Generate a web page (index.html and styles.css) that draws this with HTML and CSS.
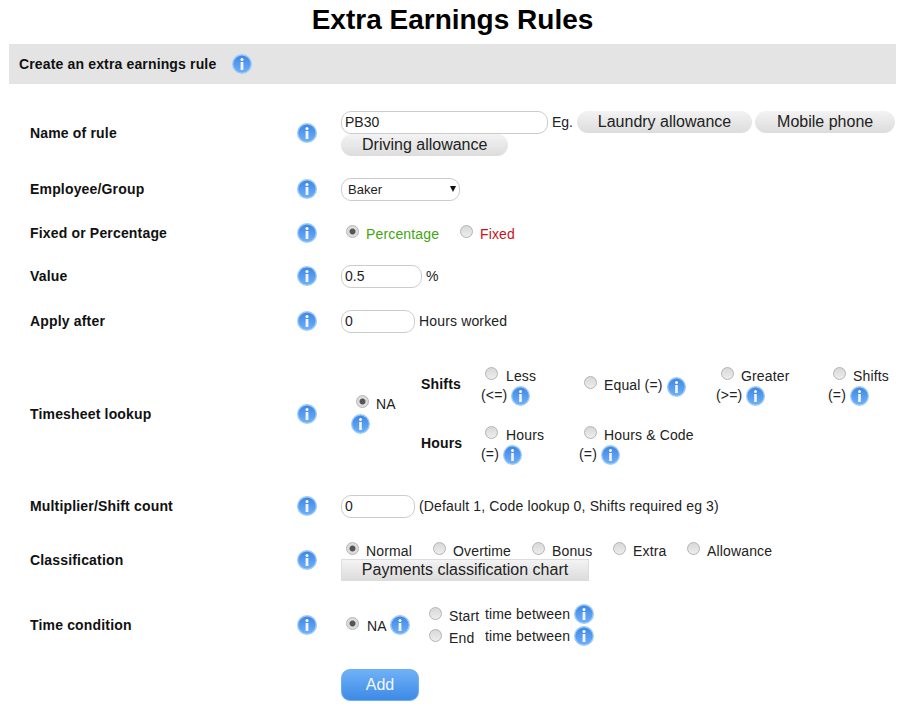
FILE: index.html
```html
<!DOCTYPE html>
<html lang="en">
<head>
<meta charset="utf-8">
<title>Extra Earnings Rules</title>
<link rel="stylesheet" href="styles.css">
</head>
<body>
<svg class="defs" width="0" height="0" aria-hidden="true">
  <defs>
    <linearGradient id="infoFill" x1="0" y1="0" x2="0" y2="1">
      <stop offset="0" stop-color="#3f86e4"/>
      <stop offset="1" stop-color="#6cb0f8"/>
    </linearGradient>
    <symbol id="info" viewBox="0 0 20 20" preserveAspectRatio="none">
      <circle cx="10" cy="10" r="10" fill="#9ccaf8"/>
      <circle cx="10" cy="10" r="8.6" fill="url(#infoFill)"/>
      <circle cx="10" cy="5.4" r="1.5" fill="#fff"/>
      <rect x="8.6" y="8" width="2.8" height="8" fill="#f6f2ff"/>
    </symbol>
  </defs>
</svg>

<h1 class="title">Extra Earnings Rules</h1>
<div class="banner"><span class="banner-text">Create an extra earnings rule</span><svg class="info"><use href="#info"/></svg></div>

<form class="form">
  <div class="row row-name">
    <div class="label">Name of rule</div>
    <svg class="info"><use href="#info"/></svg>
    <div class="field">
      <input class="text text-name" type="text" value="PB30"> Eg.
      <button type="button" class="btn">Laundry allowance</button>
      <button type="button" class="btn btn-mobile">Mobile phone</button>
      <button type="button" class="btn">Driving allowance</button>
    </div>
  </div>

  <div class="row row-employee">
    <div class="label">Employee/Group</div>
    <svg class="info"><use href="#info"/></svg>
    <div class="field"><span class="select-wrap"><select class="select"><option>Baker</option></select></span></div>
  </div>

  <div class="row row-fixed">
    <div class="label">Fixed or Percentage</div>
    <svg class="info"><use href="#info"/></svg>
    <div class="field radios">
      <label class="opt green"><input class="radio" type="radio" name="fp" checked>Percentage</label>
      <label class="opt red"><input class="radio" type="radio" name="fp">Fixed</label>
    </div>
  </div>

  <div class="row row-value">
    <div class="label">Value</div>
    <svg class="info"><use href="#info"/></svg>
    <div class="field field-line"><input class="text text-value" type="text" value="0.5"> %</div>
  </div>

  <div class="row row-apply">
    <div class="label">Apply after</div>
    <svg class="info"><use href="#info"/></svg>
    <div class="field field-line"><input class="text text-short" type="text" value="0"> Hours worked</div>
  </div>

  <div class="row row-lookup">
    <div class="label">Timesheet lookup</div>
    <svg class="info"><use href="#info"/></svg>
    <div class="field lookup">
      <div class="lookup-na">
        <label class="opt"><input class="radio" type="radio" name="ts" checked>NA</label>
        <svg class="info info-sm"><use href="#info"/></svg>
      </div>
      <div class="lookup-grid">
        <div class="group">Shifts</div>
        <div class="cell c1"><label><input class="radio" type="radio" name="ts">Less</label><br>(&lt;=) <svg class="info info-sm"><use href="#info"/></svg></div>
        <div class="cell c2"><label><input class="radio" type="radio" name="ts">Equal (=)</label> <svg class="info info-sm"><use href="#info"/></svg></div>
        <div class="cell c3"><label><input class="radio" type="radio" name="ts">Greater</label><br>(&gt;=) <svg class="info info-sm"><use href="#info"/></svg></div>
        <div class="cell c4"><label><input class="radio" type="radio" name="ts">Shifts</label><br>(=) <svg class="info info-sm"><use href="#info"/></svg></div>
        <div class="group">Hours</div>
        <div class="cell c1"><label><input class="radio" type="radio" name="ts">Hours</label><br>(=) <svg class="info info-sm"><use href="#info"/></svg></div>
        <div class="cell c2"><label><input class="radio" type="radio" name="ts">Hours &amp; Code</label><br>(=) <svg class="info info-sm"><use href="#info"/></svg></div>
      </div>
    </div>
  </div>

  <div class="row row-multi">
    <div class="label">Multiplier/Shift count</div>
    <svg class="info"><use href="#info"/></svg>
    <div class="field field-line"><input class="text text-short" type="text" value="0"> (Default 1, Code lookup 0, Shifts required eg 3)</div>
  </div>

  <div class="row row-class">
    <div class="label">Classification</div>
    <svg class="info"><use href="#info"/></svg>
    <div class="field">
      <div class="class-opts">
        <label class="opt"><input class="radio" type="radio" name="cl" checked>Normal</label>
        <label class="opt"><input class="radio" type="radio" name="cl">Overtime</label>
        <label class="opt"><input class="radio" type="radio" name="cl">Bonus</label>
        <label class="opt"><input class="radio" type="radio" name="cl">Extra</label>
        <label class="opt"><input class="radio" type="radio" name="cl">Allowance</label>
      </div>
      <button type="button" class="btn btn-square">Payments classification chart</button>
    </div>
  </div>

  <div class="row row-time">
    <div class="label">Time condition</div>
    <svg class="info"><use href="#info"/></svg>
    <div class="field time">
      <div class="time-na">
        <label class="opt"><input class="radio" type="radio" name="tc" checked>NA</label>
        <svg class="info"><use href="#info"/></svg>
      </div>
      <div class="time-list">
        <div class="time-line"><label class="time-opt"><input class="radio" type="radio" name="tc">Start</label><span>time between</span><svg class="info"><use href="#info"/></svg></div>
        <div class="time-line"><label class="time-opt"><input class="radio" type="radio" name="tc">End</label><span>time between</span><svg class="info"><use href="#info"/></svg></div>
      </div>
    </div>
  </div>

  <div class="actions"><button type="button" class="add">Add</button></div>
</form>
</body>
</html>
```
FILE: styles.css
```css
* { box-sizing: border-box; }
html, body { background: #fff; }
body {
  margin: 0;
  padding: 0 13px 0 9px;
  font-family: "Liberation Sans", Arial, sans-serif;
  font-size: 14px;
  line-height: 16px;
  letter-spacing: .15px;
  color: #222;
  overflow: hidden;
}
.defs { position: absolute; }
.title {
  margin: 0;
  height: 44px;
  padding-top: 4px;
  font-size: 28px;
  line-height: 32px;
  font-weight: bold;
  letter-spacing: 0;
  text-align: center;
  color: #000;
}
.banner {
  display: flex;
  align-items: center;
  height: 40px;
  padding-left: 10px;
  background: #e4e4e4;
  margin-bottom: 27px;
}
.banner-text { font-weight: bold; color: #111; width: 213px; letter-spacing: .15px; }
.info { width: 20px; height: 20px; flex: none; vertical-align: middle; }
.info-sm { width: 19px; height: 20px; }

.row {
  display: grid;
  grid-template-columns: 267px 44px 1fr;
  grid-template-rows: 100%;
  align-items: center;
  padding-left: 21px;
}
.label { font-weight: bold; color: #111; letter-spacing: .17px; }
.field { min-width: 0; align-self: start; }
.field-line { line-height: 23px; }

.row-name { height: 44px; margin-bottom: 23px; }
.row-employee { height: 22px; margin-bottom: 22px; }
.row-fixed { height: 22px; margin-bottom: 21px; }
.row-value { height: 22px; margin-bottom: 23px; }
.row-apply { height: 22px; margin-bottom: 28px; }
.row-lookup { height: 108px; margin-bottom: 27px; }
.row-multi { height: 22px; margin-bottom: 21px; }
.row-class { height: 44px; margin-bottom: 21px; }
.row-time { height: 44px; margin-bottom: 22px; }

.text {
  height: 23px;
  padding: 0 3px 2px;
  border: 1px solid #ccc;
  border-radius: 10px;
  font: 14px "Liberation Sans", Arial, sans-serif;
  color: #222;
  background: #fff;
  vertical-align: top;
}
.text-name { width: 207px; }
.text-value { width: 81px; }
.text-short { width: 74px; }

.row-name .field { line-height: 23px; margin-right: -2px; letter-spacing: 0; }
.btn {
  height: 22px;
  padding: 0 21px;
  margin: 0;
  border: 0;
  border-radius: 11px;
  background: linear-gradient(#f3f3f3, #dcdcdc);
  font: 16px/20px "Liberation Sans", Arial, sans-serif;
  color: #222;
  vertical-align: top;
}
.btn-mobile { padding: 0 22px; margin-left: -1px; }
.btn-square {
  display: block;
  width: 248px;
  height: 22px;
  padding: 0;
  border-radius: 0;
  border: 1px solid #ddd;
}

.select-wrap { position: relative; display: inline-block; vertical-align: top; }
.select-wrap::after {
  content: "";
  position: absolute;
  top: 8px;
  right: 4px;
  border-left: 3.5px solid transparent;
  border-right: 3.5px solid transparent;
  border-top: 6px solid #111;
}
.select {
  display: block;
  appearance: none;
  width: 119px;
  height: 23px;
  padding: 0 6px;
  border: 1px solid #ccc;
  border-radius: 10px;
  background: #fff;
  font: 13px "Liberation Sans", Arial, sans-serif;
  color: #222;
}

.radio {
  appearance: none;
  display: inline-block;
  width: 13px;
  height: 13px;
  margin: 0 7px 0 0;
  border: 1px solid #b4b4b4;
  border-radius: 50%;
  background: linear-gradient(#d8d8d8, #ededed);
  vertical-align: 1px;
}
.radio:checked {
  background: radial-gradient(circle, #555 0 2.6px, #ddd 3.4px);
}
.radios { display: flex; padding-left: 5px; align-self: center; }
.opt { display: inline-block; }
.green { color: #3fa60f; width: 114px; }
.red { color: #c9141c; }

.lookup { display: flex; align-items: center; align-self: center; }
.lookup-na { flex: none; width: 80px; padding-left: 15px; line-height: 20px; }
.lookup-na .info-sm { display: block; margin-left: -5px; }
.lookup-grid {
  flex: none;
  display: grid;
  grid-template-columns: 60px 98px 137px 112px 64px;
  grid-template-rows: 39px 39px;
  row-gap: 20px;
  align-items: center;
}
.group { width: 40px; margin-bottom: 2px; text-align: center; font-weight: bold; color: #111; letter-spacing: .17px; }
.cell { margin-top: 4px; line-height: 19px; white-space: nowrap; }
.cell label { margin-left: 5px; }
.cell.c1 label { margin-left: 4px; }
.cell.c1 .radio { margin-right: 8px; }

.class-opts { display: flex; padding-left: 5px; height: 21px; align-items: flex-end; }
.class-opts .opt:nth-child(1) { width: 87px; }
.class-opts .opt:nth-child(2) { width: 99px; }
.class-opts .opt:nth-child(3) { width: 81px; }
.class-opts .opt:nth-child(4) { width: 74px; }

.time { display: flex; align-items: center; align-self: center; }
.time-na { display: flex; align-items: center; flex: none; width: 88px; padding-left: 5px; }
.time-na .opt { margin-right: 3px; }
.time-na .radio { margin-right: 8px; }
.time-list { display: flex; flex-direction: column; gap: 2px; }
.time-line { display: flex; align-items: center; height: 20px; }
.time-opt { width: 56px; margin-top: 2px; }
.time-line span { margin-right: 4px; }

.actions { padding-left: 332px; }
.add {
  display: block;
  width: 78px;
  height: 32px;
  padding: 0;
  border: 1px solid #6ab0f5;
  border-radius: 9px;
  background: linear-gradient(#6fb1f7, #3d8ae6);
  color: #f4f8ff;
  font: 16px "Liberation Sans", Arial, sans-serif;
}
```
